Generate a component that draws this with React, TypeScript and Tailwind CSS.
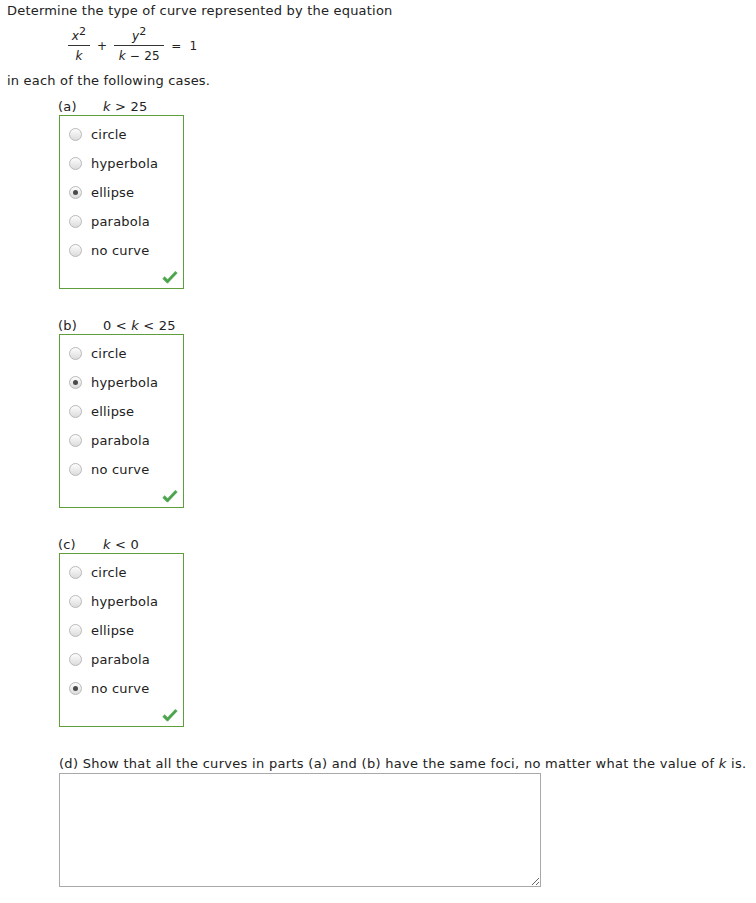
import React from "react";

type Case = { tag: string; cond: React.ReactNode; picked: number };

const options = ["circle", "hyperbola", "ellipse", "parabola", "no curve"];

const cases: Case[] = [
  { tag: "(a)", cond: <><i>k</i> &gt; 25</>, picked: 2 },
  { tag: "(b)", cond: <>0 &lt; <i>k</i> &lt; 25</>, picked: 1 },
  { tag: "(c)", cond: <><i>k</i> &lt; 0</>, picked: 4 },
];

const Radio: React.FC<{ on: boolean }> = ({ on }) => (
  <span className="w-[13px] h-[13px] rounded-full border border-[#b9b9b9] bg-gradient-to-b from-[#fdfdfd] to-[#dcdcdc] flex items-center justify-center shrink-0">
    {on && <span className="w-[5px] h-[5px] rounded-full bg-[#4a4a4a]" />}
  </span>
);

const Check = () => (
  <svg width="16" height="14" viewBox="0 0 16 14">
    <path d="M1.5 7.5 L5.5 11.5 L14.5 2" stroke="#57ad57" strokeWidth="3.2" fill="none" strokeLinejoin="round" />
    <path d="M2.5 8.5 L5.5 11.5 L13.5 3" stroke="#3a853a" strokeWidth="1" fill="none" opacity="0.6" />
  </svg>
);

const Frac: React.FC<{ top: React.ReactNode; bottom: React.ReactNode; w: string }> = ({ top, bottom, w }) => (
  <span className={`inline-flex flex-col items-center ${w}`}>
    <span className="leading-[14px] pb-[2px]">{top}</span>
    <span className="w-full h-px bg-[#333]" />
    <span className="leading-[14px] pt-[3px]">{bottom}</span>
  </span>
);

export default function App() {
  return (
    <div className="bg-white min-h-[903px] text-[13px] text-[#222] tracking-[0.2px] font-['DejaVu_Sans',Verdana,sans-serif] pl-[7px] pt-[3px]">
      <p className="leading-[16px]">Determine the type of curve represented by the equation</p>

      <div className="flex items-center gap-[7px] pl-[61px] mt-[10px] text-[12px]">
        <Frac w="w-[22px]" top={<span><i>x</i><sup className="text-[11px]">2</sup></span>} bottom={<i>k</i>} />
        <span>+</span>
        <Frac w="w-[50px]" top={<span><i>y</i><sup className="text-[11px]">2</sup></span>} bottom={<span><i>k</i> − 25</span>} />
        <span>=&nbsp;&nbsp;1</span>
      </div>

      <p className="leading-[16px] mt-[10px]">in each of the following cases.</p>

      <div className="pl-[52px] mt-[10px] flex flex-col gap-[29px]">
        {cases.map((c) => (
          <div key={c.tag}>
            <div className="flex leading-[16px] -ml-px">
              <span className="w-[45px]">{c.tag}</span>
              <span>{c.cond}</span>
            </div>
            <div className="w-[125px] h-[174px] border border-[#5f9e3c] flex flex-col pt-[4px] pl-[9px] pr-[5px]">
              {options.map((o, i) => (
                <div key={o} className="h-[29px] flex items-center gap-[9px]">
                  <Radio on={i === c.picked} />
                  <span>{o}</span>
                </div>
              ))}
              <div className="flex justify-end mt-[5px]">
                <Check />
              </div>
            </div>
          </div>
        ))}
      </div>

      <div className="pl-[52px] mt-[29px]">
        <p className="leading-[16px] tracking-[0.3px]">
          (d) Show that all the curves in parts (a) and (b) have the same foci, no matter what the value of <i>k</i> is.
        </p>
        <textarea className="block mt-[1px] w-[482px] h-[114px] border border-[#a9a9a9] bg-white" />
      </div>
    </div>
  );
}
